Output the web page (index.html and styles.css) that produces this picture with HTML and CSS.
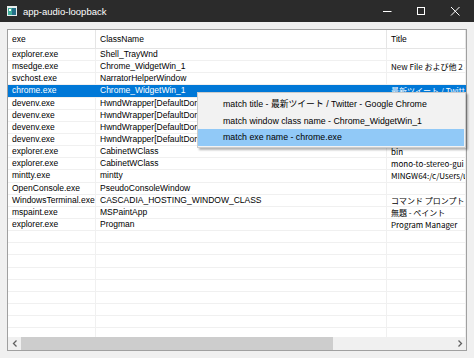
FILE: index.html
```html
<!DOCTYPE html>
<html lang="en">
<head>
    <meta charset="UTF-8">
    <title>app-audio-loopback</title>
    <link rel="stylesheet" href="styles.css">
</head>
<body>
    <div class="titlebar">
        <svg class="app-icon" width="10" height="10" viewBox="0 0 10 10">
            <rect x="0" y="0" width="10" height="10" fill="#e8eeee"/>
            <rect x="1" y="2" width="4" height="7" fill="#3fae9a"/>
            <rect x="5" y="2" width="4" height="7" fill="#26708a"/>
            <rect x="2" y="3" width="2" height="2" fill="#ffffff"/>
        </svg>
        <div class="app-title">app-audio-loopback</div>
        <div class="win-btns">
            <div class="win-btn">
                <svg width="10" height="10" viewBox="0 0 10 10"><path d="M1 5.5h8.5" stroke="#fff" stroke-width="1"/></svg>
            </div>
            <div class="win-btn">
                <svg width="10" height="10" viewBox="0 0 10 10"><rect x="1.5" y="1.5" width="7" height="7" fill="none" stroke="#fff" stroke-width="1"/></svg>
            </div>
            <div class="win-btn">
                <svg width="10" height="10" viewBox="0 0 10 10"><path d="M1 1L9.5 9.5M9.5 1L1 9.5" stroke="#fff" stroke-width="1"/></svg>
            </div>
        </div>
    </div>

    <div class="client">
        <div class="listview">
            <div class="lv-header">
                <div class="hcell c-exe">exe</div>
                <div class="hcell c-class">ClassName</div>
                <div class="hcell c-title">Title</div>
            </div>
            <div class="lv-body" id="rows"></div>
            <div class="hscroll">
                <div class="sb-arrow">
                    <svg width="6" height="7" viewBox="0 0 6 7"><path d="M4.5 0.5L1.5 3.5L4.5 6.5" fill="none" stroke="#606060" stroke-width="1.3"/></svg>
                </div>
                <div class="sb-track"><div class="sb-thumb"></div></div>
                <div class="sb-arrow">
                    <svg width="6" height="7" viewBox="0 0 6 7"><path d="M1.5 0.5L4.5 3.5L1.5 6.5" fill="none" stroke="#606060" stroke-width="1.3"/></svg>
                </div>
            </div>
        </div>
    </div>

    <div class="context-menu">
        <div class="menu-item">match title - 最新ツイート / Twitter - Google Chrome</div>
        <div class="menu-item">match window class name - Chrome_WidgetWin_1</div>
        <div class="menu-item active">match exe name - chrome.exe</div>
    </div>

    <script>
        // window list: exe, class name, title
        const windows = [
            ['explorer.exe', 'Shell_TrayWnd', ''],
            ['msedge.exe', 'Chrome_WidgetWin_1', 'New File および他 2 ページ'],
            ['svchost.exe', 'NarratorHelperWindow', ''],
            ['chrome.exe', 'Chrome_WidgetWin_1', '最新ツイート / Twitter - Google Chrome'],
            ['devenv.exe', 'HwndWrapper[DefaultDomain;;1a2b]', ''],
            ['devenv.exe', 'HwndWrapper[DefaultDomain;;5e6f]', ''],
            ['devenv.exe', 'HwndWrapper[DefaultDomain;;9c0d]', ''],
            ['devenv.exe', 'HwndWrapper[DefaultDomain;;3a4b]', ''],
            ['explorer.exe', 'CabinetWClass', 'bin'],
            ['explorer.exe', 'CabinetWClass', 'mono-to-stereo-gui'],
            ['mintty.exe', 'mintty', 'MINGW64:/c/Users/user'],
            ['OpenConsole.exe', 'PseudoConsoleWindow', ''],
            ['WindowsTerminal.exe', 'CASCADIA_HOSTING_WINDOW_CLASS', 'コマンド プロンプト'],
            ['mspaint.exe', 'MSPaintApp', '無題 - ペイント'],
            ['explorer.exe', 'Progman', 'Program Manager']
        ];
        const selected = 3;
        const body = document.getElementById('rows');
        let html = '';
        for (let i = 0; i < 24; i++) {
            const w = windows[i] || ['', '', ''];
            html += `<div class="row${i === selected ? ' selected' : ''}">
                <div class="cell c-exe">${w[0]}</div>
                <div class="cell c-class">${w[1]}</div>
                <div class="cell c-title">${w[2]}</div>
            </div>`;
        }
        body.innerHTML = html;
    </script>
</body>
</html>
```

FILE: styles.css
```css
body {
    margin: 0;
    width: 474px;
    height: 358px;
    overflow: hidden;
    background: #f0f0f0;
    font-family: "Liberation Sans", "Noto Sans CJK JP", sans-serif;
    color: #000;
}
.titlebar {
    height: 22px;
    background: #2b2b2b;
    color: #fff;
    font-size: 9.5px;
    display: flex;
    align-items: center;
}
.app-icon {
    margin-left: 7px;
    flex: none;
}
.app-title {
    margin-left: 6px;
    flex: 1;
}
.win-btns {
    display: flex;
    margin-right: 2px;
}
.win-btn {
    width: 34px;
    height: 22px;
    display: flex;
    align-items: center;
    justify-content: center;
}
.client {
    padding: 7px 7px 0 7px;
}
.listview {
    height: 320px;
    border: 1px solid #a0a0a0;
    background: #fff;
    overflow: hidden;
    display: flex;
    flex-direction: column;
    font-size: 8.5px;
}
.lv-header {
    flex: none;
    height: 18px;
    display: flex;
    border-bottom: 1px solid #e5e5e5;
}
.hcell {
    display: flex;
    align-items: center;
    flex: none;
    box-sizing: border-box;
    padding-left: 4px;
    border-right: 1px solid #e5e5e5;
    white-space: nowrap;
}
.lv-body {
    flex: 1;
    overflow: hidden;
}
.row {
    display: flex;
    height: 12.15px;
    box-sizing: border-box;
    border-bottom: 1px solid #f0f0f0;
    line-height: 11px;
}
.row.selected {
    background: #0078d7;
    color: #fff;
}
.cell {
    flex: none;
    box-sizing: border-box;
    padding-left: 4px;
    white-space: nowrap;
    overflow: hidden;
    border-right: 1px solid #f0f0f0;
}
.row.selected .cell {
    border-right-color: #0078d7;
}
.c-exe { width: 88px; }
.c-class { width: 291px; }
.c-title { width: 79px; }
.cell.c-title {
    font-family: "Noto Sans CJK JP", sans-serif;
    font-size: 8px;
}
.hscroll {
    flex: none;
    height: 13px;
    display: flex;
    background: #f0f0f0;
}
.sb-arrow {
    width: 13px;
    display: flex;
    align-items: center;
    justify-content: center;
}
.sb-track {
    flex: 1;
}
.sb-thumb {
    width: 312px;
    height: 13px;
    background: #cdcdcd;
}
.context-menu {
    position: absolute;
    left: 197px;
    top: 92px;
    width: 266px;
    padding: 3px 1px 1px 0;
    background: #f2f2f2;
    border: 1px solid #cccccc;
    box-shadow: 2px 2px 2px rgba(0,0,0,0.3);
    font-size: 8.8px;
}
.menu-item {
    height: 16.5px;
    line-height: 16.5px;
    padding-left: 25px;
    white-space: nowrap;
}
.menu-item.active {
    background: #91c9f7;
}
```
